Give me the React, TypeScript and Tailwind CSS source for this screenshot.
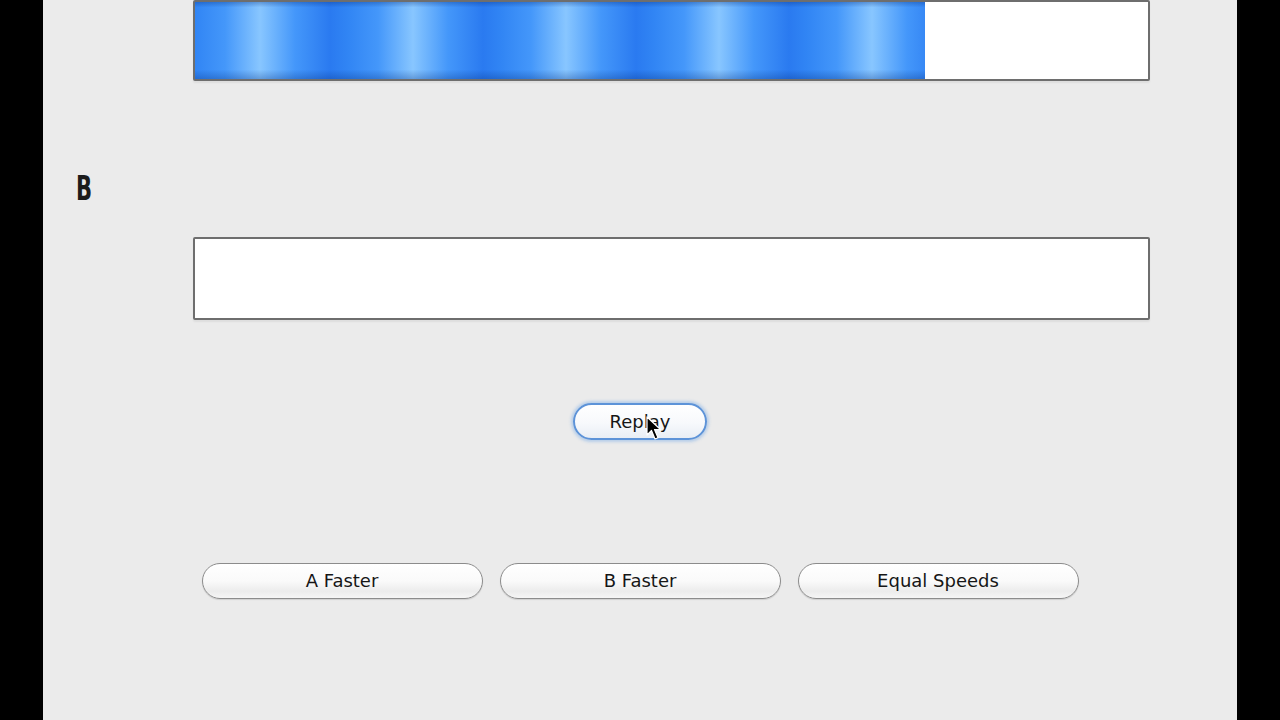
import React from "react";

const font = { fontFamily: '"DejaVu Sans", "Liberation Sans", sans-serif' };

function Bar({ fill, height }: { fill?: boolean; height: string }) {
  return (
    <div
      className={`ml-[150px] w-[957px] ${height} rounded-[2px] border-2 border-[#6e6e6e] bg-white shadow-[0_2px_2px_rgba(0,0,0,0.06)] overflow-hidden flex`}
    >
      {fill && (
        <div className="relative w-[730px] h-full bg-[repeating-linear-gradient(90deg,#3185f4_0px,#4497fa_30px,#88c6ff_65px,#4497fa_100px,#2a7af0_135px,#3185f4_153px)]">
          <div className="absolute inset-0 bg-[linear-gradient(180deg,rgba(0,40,120,0.3)_0%,rgba(0,40,120,0)_7%,rgba(255,255,255,0)_88%,rgba(0,40,120,0.28)_100%)]" />
        </div>
      )}
    </div>
  );
}

function PillButton({ label }: { label: string }) {
  return (
    <button
      style={font}
      className="w-[281px] h-[36px] rounded-full border-[1.5px] border-[#8c8c8c] bg-[linear-gradient(180deg,#ffffff_0%,#fafafa_50%,#ececec_80%,#f6f6f6_100%)] shadow-[0_1px_1px_rgba(0,0,0,0.12)] text-[18px] text-[#161616] leading-none"
    >
      {label}
    </button>
  );
}

export default function App() {
  return (
    <div className="w-full h-[720px] bg-black flex justify-center overflow-hidden">
      <div className="relative w-[1194px] h-full bg-[#ebebeb] flex flex-col">
        <Bar fill height="h-[81px]" />

        <div
          style={font}
          className="mt-[90px] ml-[33px] h-[34px] text-[34px] font-bold leading-none text-[#1c1c1c] scale-x-[0.62] origin-left"
        >
          B
        </div>

        <div className="mt-[32px]">
          <Bar height="h-[83px]" />
        </div>

        <div className="mt-[83px] flex justify-center">
          <button
            style={font}
            className="w-[134px] h-[37px] rounded-full border-2 border-[#5d93d8] bg-[linear-gradient(180deg,#ffffff_0%,#f7f9fc_55%,#e9eef5_100%)] shadow-[0_0_3px_2px_rgba(120,170,230,0.45)] text-[18px] text-[#161616] leading-none"
          >
            Replay
          </button>
        </div>

        <div className="mt-[123px] flex justify-center gap-[17px]">
          <PillButton label="A Faster" />
          <PillButton label="B Faster" />
          <PillButton label="Equal Speeds" />
        </div>

        {/* mouse pointer */}
        <svg
          className="absolute left-[603px] top-[416px]"
          width="16"
          height="26"
          viewBox="0 0 16 26"
        >
          <path
            d="M1 1 L1 19 L5.5 14.5 L9 23 L12 21.8 L8.5 13.5 L14.5 13.5 Z"
            fill="#000"
            stroke="#fff"
            strokeWidth="1.2"
            strokeLinejoin="round"
          />
        </svg>
      </div>
    </div>
  );
}
